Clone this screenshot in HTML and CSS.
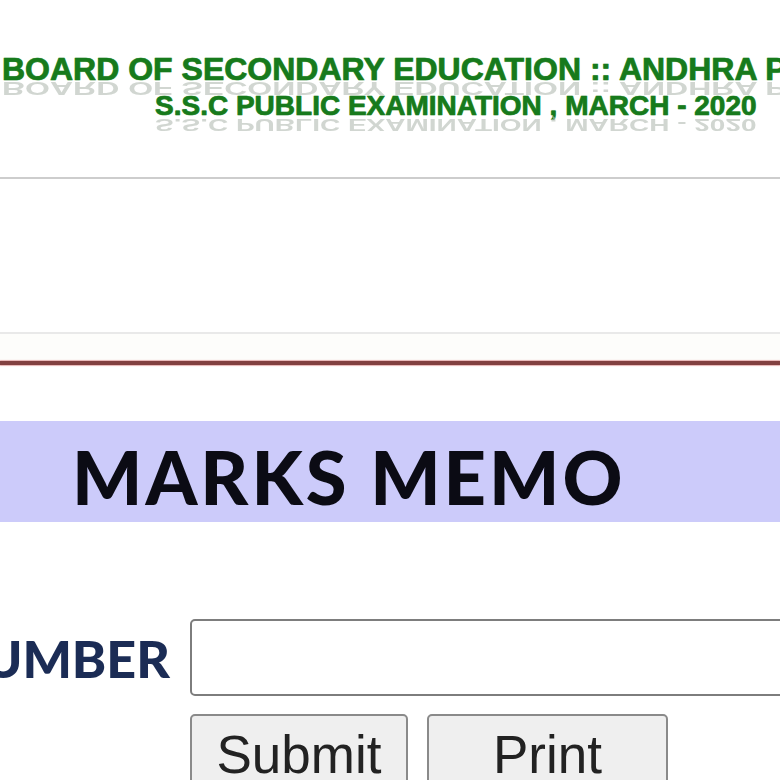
FILE: index.html
```html
<!DOCTYPE html>
<html lang="en">
<head>
  <meta charset="UTF-8">
  <meta name="viewport" content="width=device-width, initial-scale=1.0">
  <title>SSC Public Examination March 2020 – Marks Memo</title>
  <link rel="stylesheet" href="styles.css">
</head>
<body>
  <header class="banner">
    <div class="title-main" data-reflect="BOARD OF SECONDARY EDUCATION :: ANDHRA PRADESH">BOARD OF SECONDARY EDUCATION :: ANDHRA PRADESH</div>
    <div class="title-sub" data-reflect="S.S.C PUBLIC EXAMINATION , MARCH - 2020">S.S.C PUBLIC EXAMINATION , MARCH - 2020</div>
  </header>
  <div class="rule-grey"></div>
  <div class="blank"></div>
  <div class="strip"></div>
  <div class="rule-red"></div>

  <div class="memo-band">
    <h1>MARKS MEMO</h1>
  </div>

  <form class="memo-form" id="memoForm">
    <div class="row">
      <div class="label-cell"><label for="hallTicket">HALL TICKET NUMBER</label></div>
      <input type="text" id="hallTicket" name="hallTicket">
    </div>
    <div class="actions">
      <button type="submit">Submit</button>
      <button type="button">Print</button>
    </div>
  </form>
</body>
</html>
```
FILE: styles.css
```css
html, body { margin: 0; padding: 0; }
body { width: 780px; height: 780px; overflow: hidden; background: #fff; font-family: "Liberation Sans", Arial, sans-serif; }

.banner { height: 177px; box-sizing: border-box; padding-top: 53px; white-space: nowrap; overflow: hidden; }
.title-main, .title-sub { font-weight: bold; color: #177a1c; -webkit-text-stroke: 0.6px #177a1c; text-shadow: 0 0 1px #5cbf5c; }
.title-main { font-size: 32px; line-height: 32px; padding-left: 2px; }
.title-sub { font-size: 28px; line-height: 28px; padding-left: 155px; margin-top: 5px; }
.title-main::after, .title-sub::after { content: attr(data-reflect); display: block; color: #b3bcb3; -webkit-text-stroke: 0; text-shadow: none; opacity: 0.6; filter: blur(0.6px); }
.title-main::after { margin-top: -30px; transform-origin: 50% 27px; transform: scaleY(-0.55); }
.title-sub::after { margin-top: -26px; transform-origin: 50% 24px; transform: scaleY(-0.6); }

.rule-grey { height: 2px; background: #cdcdcd; }
.blank { height: 153px; border-bottom: 2px solid #e9e9e9; }
.strip { height: 27px; background: #fdfdfb; }
.rule-red { height: 4px; background: #824141; box-shadow: 0 -1px 1px #e8b4b4, 0 1px 1px #e8b4b4; }

.memo-band { margin-top: 56px; height: 101px; box-sizing: border-box; padding: 10px 0 0 72px; background: #cccbfa; display: flex; align-items: center; }
.memo-band h1 { margin: 0; font-family: Lato, "Open Sans", sans-serif; font-weight: 900; font-size: 74px; color: #0b0b14; letter-spacing: 3px; }

.memo-form { margin-top: 97px; }
.row { display: grid; grid-template-columns: 170px 1fr; column-gap: 20px; align-items: center; }
.label-cell { display: flex; justify-content: flex-end; white-space: nowrap; }
.label-cell label { font-family: Lato, "Open Sans", sans-serif; font-weight: 900; font-size: 52px; color: #1b2c55; }
.row input { height: 77px; width: 700px; box-sizing: border-box; border: 2px solid #7d7d7d; border-radius: 5px; background: #fff; }

.actions { display: flex; gap: 19px; margin-top: 18px; padding-left: 190px; }
.actions button { height: 80px; box-sizing: border-box; border: 2px solid #8a8a8a; border-radius: 5px; background: #efefef; font-family: "Liberation Sans", Arial, sans-serif; font-size: 53px; color: #222; padding: 0; }
.actions button:first-child { width: 218px; }
.actions button:last-child { width: 241px; }
```
